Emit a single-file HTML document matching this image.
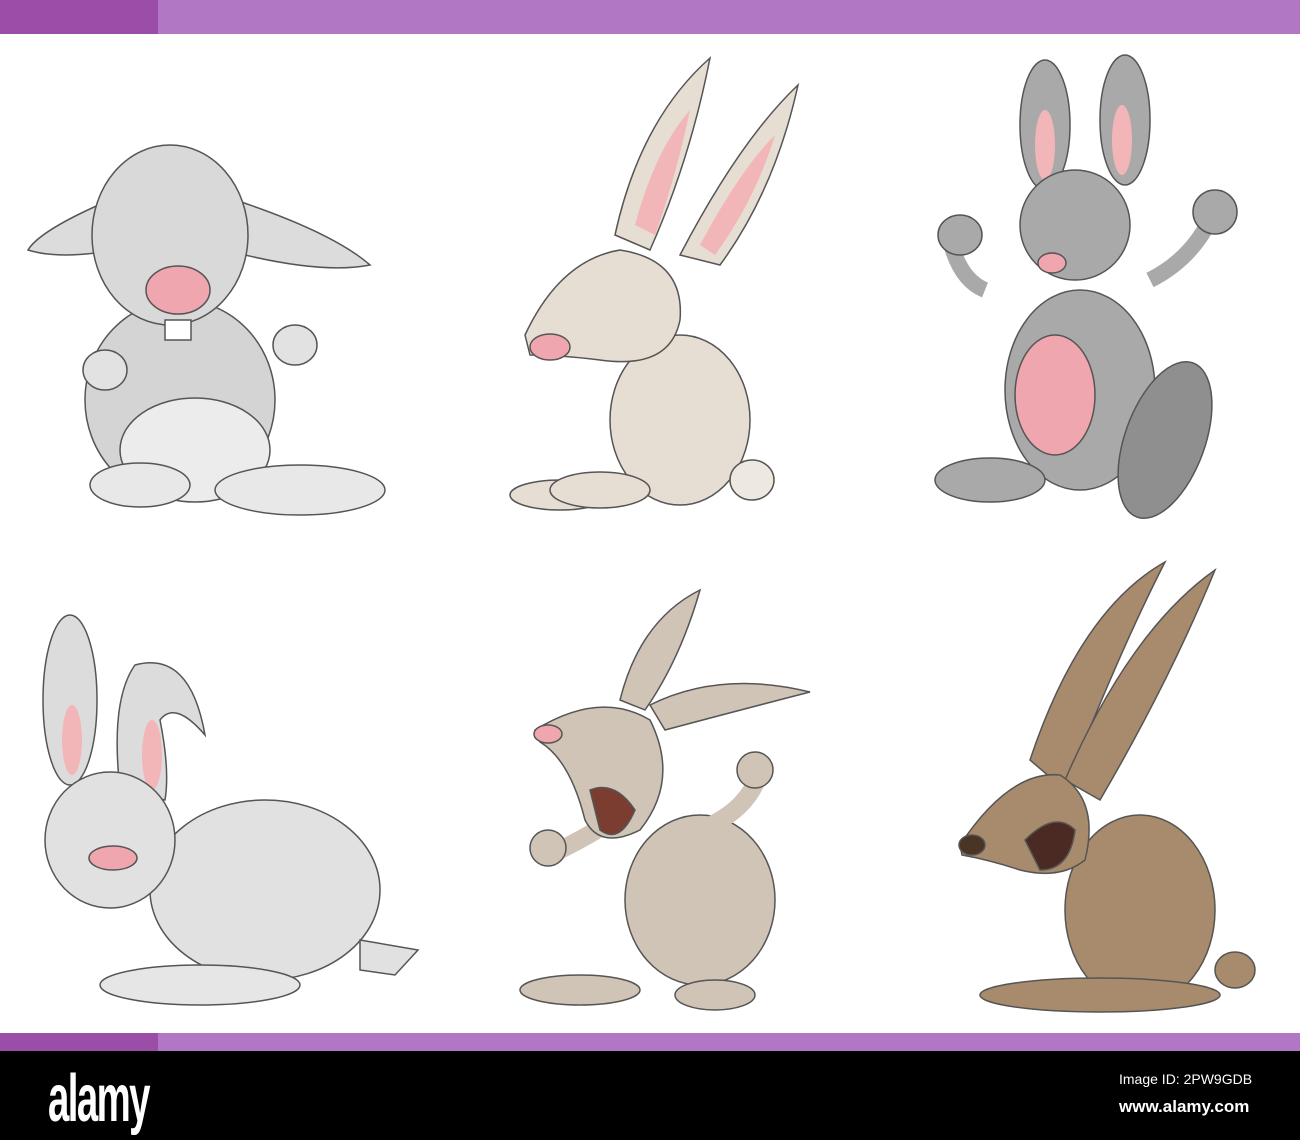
<!DOCTYPE html>
<html><head><meta charset="utf-8"><style>
html,body{margin:0;padding:0;width:1300px;height:1140px;background:#fff;overflow:hidden;font-family:"Liberation Sans",sans-serif}
.bar{position:absolute;left:0;width:1300px;background:#b277c4}
.dark{position:absolute;left:0;top:0;height:100%;width:158px;background:#9b4ea8}
#foot{position:absolute;left:0;top:1051px;width:1300px;height:89px;background:#000;color:#fff}
</style></head><body>
<div class="bar" style="top:0;height:34px"><div class="dark"></div></div>
<svg width="1300" height="1000" style="position:absolute;left:0;top:34px" viewBox="0 34 1300 1000">
<g stroke="#555" stroke-width="1.5">
<!-- rabbit 1 -->
<path d="M110 200 Q40 230 28 250 Q60 260 115 250 Z" fill="#dcdcdc"/>
<path d="M220 195 Q330 230 370 265 Q320 275 225 250 Z" fill="#dcdcdc"/>
<ellipse cx="180" cy="400" rx="95" ry="100" fill="#d4d4d4"/>
<ellipse cx="195" cy="450" rx="75" ry="52" fill="#ececec"/>
<ellipse cx="300" cy="490" rx="85" ry="25" fill="#e8e8e8"/>
<ellipse cx="140" cy="485" rx="50" ry="22" fill="#e8e8e8"/>
<ellipse cx="170" cy="235" rx="78" ry="90" fill="#d9d9d9"/>
<ellipse cx="178" cy="290" rx="32" ry="24" fill="#f0a6ae"/>
<rect x="165" y="320" width="26" height="20" fill="#fff"/>
<ellipse cx="105" cy="370" rx="22" ry="20" fill="#e2e2e2"/>
<ellipse cx="295" cy="345" rx="22" ry="20" fill="#e2e2e2"/>
<!-- rabbit 2 -->
<path d="M615 235 Q640 120 710 58 Q690 160 650 250 Z" fill="#e6ddd3"/>
<path d="M680 255 Q740 140 798 85 Q775 190 720 265 Z" fill="#e6ddd3"/>
<path d="M635 225 Q655 150 690 110 Q675 180 655 235Z" fill="#f2b6b8" stroke="none"/>
<path d="M700 245 Q740 170 775 135 Q755 200 715 255Z" fill="#f2b6b8" stroke="none"/>
<ellipse cx="680" cy="420" rx="70" ry="85" fill="#e6ddd3"/>
<ellipse cx="560" cy="495" rx="50" ry="15" fill="#e6ddd3"/>
<ellipse cx="600" cy="490" rx="50" ry="18" fill="#e6ddd3"/>
<ellipse cx="752" cy="480" rx="22" ry="20" fill="#eee8e0"/>
<path d="M525 335 Q560 260 620 250 Q685 260 680 320 Q670 370 600 360 Q560 355 530 355 Z" fill="#e6ddd3"/>
<ellipse cx="550" cy="347" rx="20" ry="13" fill="#f0a6ae"/>
<!-- rabbit 3 -->
<ellipse cx="1045" cy="125" rx="25" ry="65" fill="#a9a9a9"/>
<ellipse cx="1125" cy="120" rx="25" ry="65" fill="#a9a9a9"/>
<ellipse cx="1045" cy="145" rx="10" ry="35" fill="#f2b6b8" stroke="none"/>
<ellipse cx="1122" cy="140" rx="10" ry="35" fill="#f2b6b8" stroke="none"/>
<path d="M985 290 Q960 280 950 240" fill="none" stroke="#a9a9a9" stroke-width="16"/>
<path d="M1150 280 Q1190 260 1210 220" fill="none" stroke="#a9a9a9" stroke-width="16"/>
<ellipse cx="960" cy="235" rx="22" ry="20" fill="#a9a9a9"/>
<ellipse cx="1215" cy="212" rx="22" ry="22" fill="#a9a9a9"/>
<ellipse cx="1080" cy="390" rx="75" ry="100" fill="#a9a9a9"/>
<ellipse cx="1055" cy="395" rx="40" ry="60" fill="#f0a6ae"/>
<ellipse cx="990" cy="480" rx="55" ry="22" fill="#a9a9a9"/>
<ellipse cx="1165" cy="440" rx="40" ry="82" fill="#8f8f8f" transform="rotate(20 1165 440)"/>
<ellipse cx="1075" cy="225" rx="55" ry="55" fill="#a9a9a9"/>
<ellipse cx="1052" cy="263" rx="14" ry="10" fill="#f0a6ae"/>
<!-- rabbit 4 -->
<ellipse cx="70" cy="700" rx="27" ry="85" fill="#dcdcdc"/>
<path d="M120 790 Q110 700 135 665 Q190 650 205 735 Q175 700 160 720 Q170 770 165 800Z" fill="#dcdcdc"/>
<ellipse cx="72" cy="740" rx="10" ry="35" fill="#f2b6b8" stroke="none"/>
<ellipse cx="152" cy="755" rx="10" ry="35" fill="#f2b6b8" stroke="none"/>
<ellipse cx="265" cy="890" rx="115" ry="90" fill="#e1e1e1"/>
<path d="M360 940 L418 950 L395 975 L360 970Z" fill="#e1e1e1"/>
<ellipse cx="200" cy="985" rx="100" ry="20" fill="#e6e6e6"/>
<ellipse cx="110" cy="840" rx="65" ry="68" fill="#e1e1e1"/>
<ellipse cx="113" cy="858" rx="24" ry="12" fill="#f0a6ae"/>
<!-- rabbit 5 -->
<path d="M620 700 Q640 620 700 590 Q680 660 645 710Z" fill="#d0c4b6"/>
<path d="M650 705 Q720 670 810 692 Q740 710 665 730Z" fill="#d0c4b6"/>
<ellipse cx="700" cy="900" rx="75" ry="85" fill="#d0c4b6"/>
<ellipse cx="580" cy="990" rx="60" ry="15" fill="#d0c4b6"/>
<ellipse cx="715" cy="995" rx="40" ry="15" fill="#d0c4b6"/>
<path d="M560 850 Q600 830 610 820" fill="none" stroke="#d0c4b6" stroke-width="18"/>
<path d="M700 830 Q750 810 760 770" fill="none" stroke="#d0c4b6" stroke-width="18"/>
<ellipse cx="548" cy="848" rx="18" ry="18" fill="#d0c4b6"/>
<ellipse cx="755" cy="770" rx="18" ry="18" fill="#d0c4b6"/>
<path d="M535 730 Q600 690 650 720 Q680 780 640 830 Q600 850 585 820 Q570 760 540 742Z" fill="#d0c4b6"/>
<ellipse cx="548" cy="734" rx="14" ry="9" fill="#f0a6ae"/>
<path d="M590 790 Q615 780 635 810 Q620 845 600 830Z" fill="#7a3d30"/>
<!-- rabbit 6 -->
<path d="M1030 760 Q1080 610 1165 562 Q1120 650 1065 790Z" fill="#a88a6c"/>
<path d="M1065 780 Q1130 630 1215 570 Q1170 680 1100 800Z" fill="#a88a6c"/>
<ellipse cx="1140" cy="910" rx="75" ry="95" fill="#a88a6c"/>
<ellipse cx="1235" cy="970" rx="20" ry="18" fill="#a88a6c"/>
<ellipse cx="1100" cy="995" rx="120" ry="17" fill="#a88a6c"/>
<path d="M960 845 Q1010 770 1060 775 Q1100 800 1085 860 Q1060 880 1020 870 Q990 860 962 855Z" fill="#a88a6c"/>
<ellipse cx="972" cy="845" rx="13" ry="10" fill="#4a3426"/>
<path d="M1025 840 Q1055 810 1075 830 Q1070 870 1040 870Z" fill="#4a2a22"/>
</g>
</svg>
<div class="bar" style="top:1033px;height:18px"><div class="dark"></div></div>
<div id="foot">
<div style="position:absolute;left:48px;top:10px;font-size:48px;font-weight:bold;letter-spacing:-2px;transform:scale(0.8,1.4);transform-origin:top left">alamy</div>
<div style="position:absolute;left:1119px;top:20px;font-size:14px">Image ID: 2PW9GDB</div>
<div style="position:absolute;left:1119px;top:46px;font-size:17px;font-weight:bold">www.alamy.com</div>
</div>
</body></html>
